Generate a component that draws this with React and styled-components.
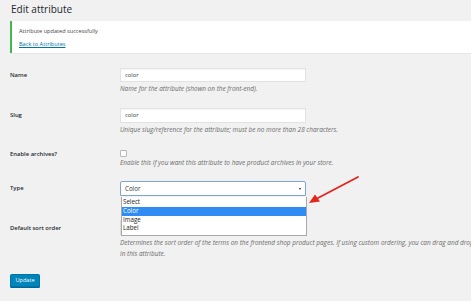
import React from "react";
import styled, { createGlobalStyle } from "styled-components";

const GlobalStyle = createGlobalStyle`
  html, body {
    margin: 0;
    padding: 0;
    background: #ffffff;
  }
  body {
    font-family: "Open Sans", "Noto Sans", "Liberation Sans", sans-serif;
  }
`;

const Frame = styled.div`
  position: relative;
  width: 471px;
  height: 301px;
  overflow: hidden;
  background: #f1f1f1;
  padding-left: 10px;
  box-sizing: border-box;
`;

const Title = styled.h1`
  margin: 3px 0 0 1px;
  font-size: 10px;
  line-height: 13px;
  font-weight: 400;
  color: #23282d;
`;

const Notice = styled.div`
  margin-top: 5px;
  width: 520px;
  height: 32px;
  box-sizing: border-box;
  background: #fff;
  border-left: 2px solid #46b450;
  box-shadow: 0 1px 1px rgba(0, 0, 0, 0.04);
  padding: 6px 0 0 7px;
  font-size: 5.6px;
  line-height: 8px;
  color: #444;
`;

const NoticeLine = styled.p`
  margin: 0 0 ${(p) => p.$mb || 0}px;
`;

const BackLink = styled.a`
  color: #0073aa;
  text-decoration: underline;
`;

const Row = styled.div`
  display: grid;
  grid-template-columns: 110px 1fr;
  margin-top: ${(p) => p.$gap}px;
`;

const Label = styled.label`
  font-size: 5.9px;
  font-weight: 600;
  color: #23282d;
  line-height: ${(p) => p.$lh || 14}px;
`;

const Field = styled.div`
  position: relative;
  min-width: 0;
`;

const TextInput = styled.div`
  width: 186px;
  height: ${(p) => p.$h || 14}px;
  box-sizing: border-box;
  background: #fff;
  border: 1px solid #e2e2e2;
  box-shadow: inset 0 1px 1px rgba(0, 0, 0, 0.04);
  padding-left: 4px;
  font-size: 5.8px;
  line-height: ${(p) => (p.$h || 14) - 2}px;
  color: #32373c;
`;

const Desc = styled.p`
  margin: ${(p) => p.$mt || 3}px 0 0;
  font-size: 6.45px;
  line-height: ${(p) => p.$lh || 8}px;
  font-style: italic;
  color: #6b6b6b;
  white-space: nowrap;
`;

const Checkbox = styled.div`
  width: 7px;
  height: 7px;
  box-sizing: border-box;
  background: #fff;
  border: 1px solid #b4b9be;
  border-radius: 1px;
`;

const Select = styled.div`
  position: relative;
  width: 186px;
  height: 15px;
  box-sizing: border-box;
  background: #fff;
  border: 1px solid ${(p) => (p.$focus ? "#7fa6cf" : "#dcdcdc")};
  border-radius: ${(p) => (p.$focus ? "2px 2px 0 0" : "0")};
  padding-left: 4px;
  font-size: 6.2px;
  line-height: 13px;
  color: #32373c;
`;

const Caret = styled.span`
  position: absolute;
  right: 4px;
  top: 6px;
  width: 0;
  height: 0;
  border-left: 1.2px solid transparent;
  border-right: 1.2px solid transparent;
  border-top: 2px solid #222;
`;

const Options = styled.ul`
  position: absolute;
  z-index: 2;
  left: 0;
  top: 15px;
  width: 186px;
  margin: 0;
  padding: 1px 0 2px;
  box-sizing: border-box;
  list-style: none;
  background: #fff;
  border: 1px solid #a9a9a9;
  border-top: none;
`;

const Option = styled.li`
  height: 8.8px;
  line-height: 8.8px;
  padding-left: 1px;
  font-size: 6.2px;
  color: ${(p) => (p.$active ? "#fff" : "#222")};
  background: ${(p) => (p.$active ? "#2e8cf2" : "transparent")};
`;

const Button = styled.button`
  display: block;
  margin-top: 15px;
  width: 30px;
  height: 13px;
  padding: 0;
  background: #0085ba;
  border: 1px solid #0073aa;
  border-radius: 1.5px;
  box-shadow: 0 1px 0 #006799;
  color: #fff;
  font-family: inherit;
  font-size: 5.6px;
  line-height: 11px;
`;

const Annotation = styled.svg`
  position: absolute;
  left: 0;
  top: 0;
  z-index: 3;
  pointer-events: none;
`;

const typeOptions = ["Select", "Color", "Image", "Label"];

export default function App() {
  return (
    <>
      <GlobalStyle />
      <Frame>
        <Title>Edit attribute</Title>
        <Notice>
          <NoticeLine $mb={5}>Attribute updated successfully</NoticeLine>
          <NoticeLine>
            <BackLink href="#">Back to Attributes</BackLink>
          </NoticeLine>
        </Notice>

        <Row $gap={15}>
          <Label>Name</Label>
          <Field>
            <TextInput>color</TextInput>
            <Desc>Name for the attribute (shown on the front-end).</Desc>
          </Field>
        </Row>

        <Row $gap={15}>
          <Label $lh={15}>Slug</Label>
          <Field>
            <TextInput $h={15}>color</TextInput>
            <Desc>
              Unique slug/reference for the attribute; must be no more than 28
              characters.
            </Desc>
          </Field>
        </Row>

        <Row $gap={16}>
          <Label $lh={8}>Enable archives?</Label>
          <Field>
            <Checkbox />
            <Desc $mt={2}>
              Enable this if you want this attribute to have product archives
              in your store.
            </Desc>
          </Field>
        </Row>

        <Row $gap={14}>
          <Label $lh={15}>Type</Label>
          <Field>
            <Select $focus>
              Color
              <Caret />
              <Options>
                {typeOptions.map((o) => (
                  <Option key={o} $active={o === "Color"}>
                    {o}
                  </Option>
                ))}
              </Options>
            </Select>
          </Field>
        </Row>

        <Row $gap={24}>
          <Label $lh={16}>Default sort order</Label>
          <Field>
            <Select>
              <Caret />
            </Select>
            <Desc $mt={2} $lh={11}>
              Determines the sort order of the terms on the frontend shop
              product pages. If using custom ordering, you can drag and drop
              the terms
              <br />
              in this attribute.
            </Desc>
          </Field>
        </Row>

        <Button>Update</Button>

        <Annotation width="471" height="301" viewBox="0 0 471 301">
          <line
            x1="358"
            y1="177"
            x2="318"
            y2="198"
            stroke="#e3241c"
            strokeWidth="1.8"
            strokeLinecap="round"
          />
          <polygon points="309,203 315,194.5 320,201.5" fill="#e3241c" />
        </Annotation>
      </Frame>
    </>
  );
}
